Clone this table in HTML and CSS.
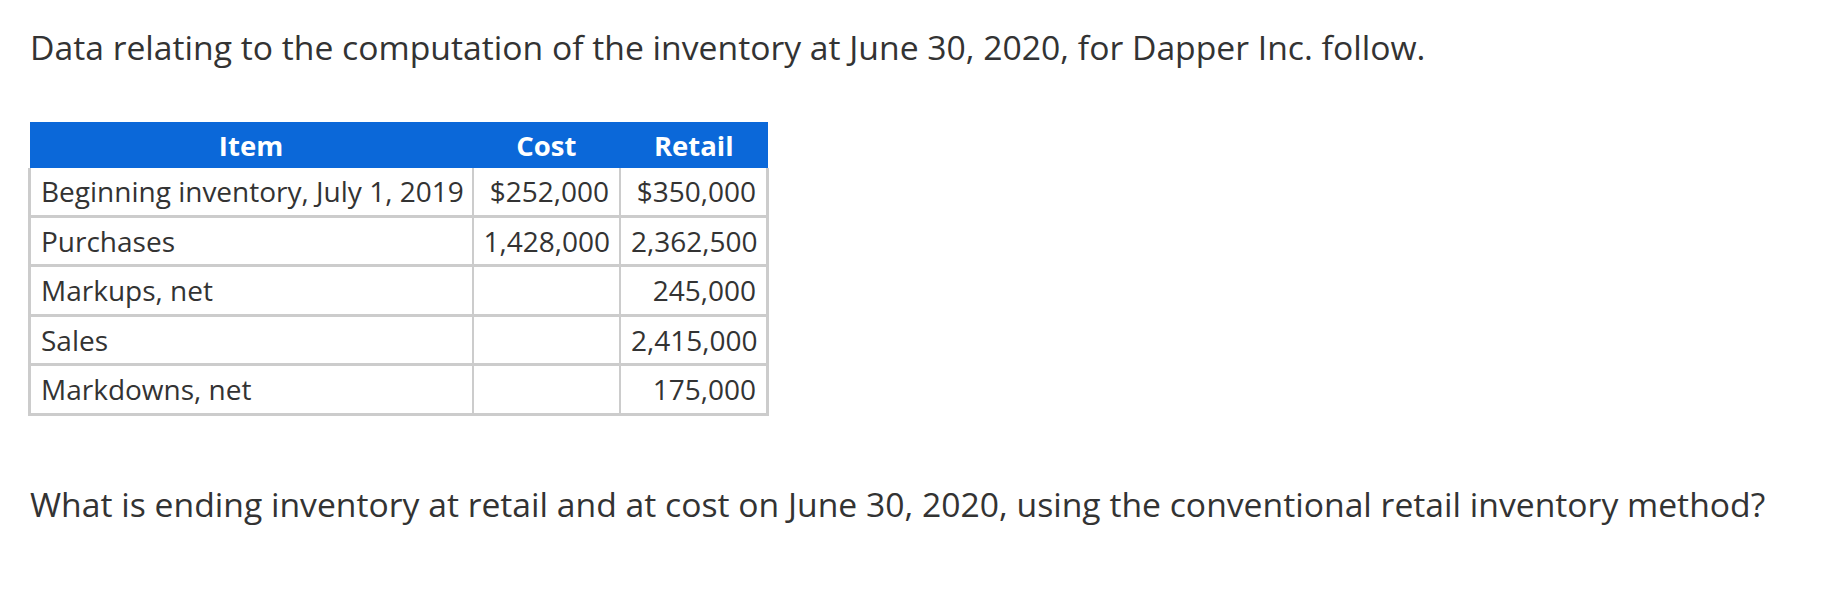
FILE: index.html
```html
<!DOCTYPE html>
<html lang="en">
<head>
<meta charset="utf-8">
<title>Dapper Inc. inventory</title>
<link rel="stylesheet" href="styles.css">
</head>
<body>
<main class="question">
  <p class="text">Data relating to the computation of the inventory at June 30, 2020, for Dapper Inc. follow.</p>
  <table class="data">
    <colgroup>
      <col class="col-item">
      <col class="col-num">
      <col class="col-num">
    </colgroup>
    <thead>
      <tr><th>Item</th><th>Cost</th><th>Retail</th></tr>
    </thead>
    <tbody>
      <tr><td>Beginning inventory, July 1, 2019</td><td class="num">$252,000</td><td class="num">$350,000</td></tr>
      <tr><td>Purchases</td><td class="num">1,428,000</td><td class="num">2,362,500</td></tr>
      <tr><td>Markups, net</td><td class="num"></td><td class="num">245,000</td></tr>
      <tr><td>Sales</td><td class="num"></td><td class="num">2,415,000</td></tr>
      <tr><td>Markdowns, net</td><td class="num"></td><td class="num">175,000</td></tr>
    </tbody>
  </table>
  <p class="text">What is ending inventory at retail and at cost on June 30, 2020, using the conventional retail inventory method?</p>
</main>
</body>
</html>
```

FILE: styles.css
```css
html, body {
  margin: 0;
  padding: 0;
  background: #ffffff;
}

body {
  font-family: "Open Sans", "Noto Sans", sans-serif;
  color: #333333;
}

.question {
  display: flex;
  flex-direction: column;
  align-items: flex-start;
  padding: 24px 0 0 30px;
}

.text {
  margin: 0;
  font-size: 33.7px;
  line-height: 46px;
}

.data {
  margin: 52px 0 65px -2px;
  border-collapse: collapse;
  table-layout: fixed;
  width: 738px;
  font-size: 28px;
}

.col-item { width: 443px; }
.col-num { width: 147.5px; }

.data th {
  background: #0b68d9;
  color: #ffffff;
  font-weight: 700;
  font-size: 27.5px;
  height: 46px;
  padding: 0 10px;
  text-align: center;
}

.data td {
  border-left: 2px solid #cccccc;
  border-right: 2px solid #cccccc;
  border-bottom: 3px solid #cccccc;
  height: 46.5px;
  padding: 0 10px;
  white-space: nowrap;
}

.data td:first-child { border-left-width: 3px; }
.data td:last-child { border-right-width: 3px; }

.data td.num { text-align: right; }
```
